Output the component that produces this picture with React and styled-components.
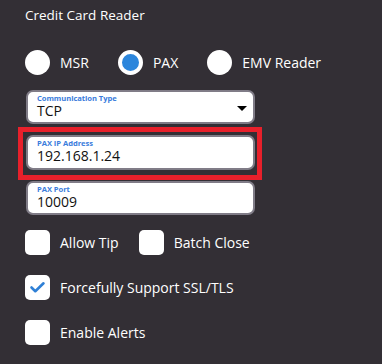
import React from "react";
import styled, { createGlobalStyle } from "styled-components";

const Global = createGlobalStyle`
  html, body { margin: 0; padding: 0; background: #332f35; }
  body { font-family: "Open Sans", "Noto Sans", sans-serif; }
`;

const Page = styled.div`
  width: 382px;
  height: 364px;
  box-sizing: border-box;
  padding: 5px 0 0 25px;
  background: #332f35;
  color: #ffffff;
  overflow: hidden;
`;

const Title = styled.div`
  font-size: 13.5px;
  line-height: 20px;
  color: #ffffff;
`;

const RadioRow = styled.div`
  display: flex;
  align-items: center;
  gap: 29px;
  margin-top: 25px;
`;

const Option = styled.label`
  display: flex;
  align-items: center;
  gap: 10px;
  font-size: 14px;
  line-height: 25px;
  color: #ffffff;
`;

const RadioDot = styled.span`
  width: 25px;
  height: 25px;
  border-radius: 50%;
  background: ${(p) => (p.$checked ? "#2c86dc" : "#ffffff")};
  box-sizing: border-box;
  border: ${(p) => (p.$checked ? "4px solid #ffffff" : "none")};
  flex: none;
`;

const Fields = styled.div`
  display: flex;
  flex-direction: column;
  margin-top: 15px;
  margin-left: 1px;
  width: 229px;
`;

const Field = styled.div`
  height: ${(p) => p.$h || 34}px;
  box-sizing: border-box;
  background: #ffffff;
  border: 2px solid #807c87;
  border-radius: 7px;
  padding: 1px 6px 0 9px;
  display: flex;
  align-items: center;
  justify-content: space-between;
`;

const FieldText = styled.div`
  display: flex;
  flex-direction: column;
  align-self: flex-start;
`;

const FieldLabel = styled.div`
  font-size: 7.6px;
  font-weight: 700;
  line-height: 10px;
  color: #3a7cdc;
  letter-spacing: -0.05px;
`;

const FieldValue = styled.div`
  font-size: 14px;
  line-height: 16px;
  color: #111111;
`;

const Caret = styled.span`
  width: 0;
  height: 0;
  border-left: 5px solid transparent;
  border-right: 5px solid transparent;
  border-top: 5px solid #000000;
  margin-top: 1px;
`;

const Highlight = styled.div`
  margin: 3px -7px 1px -8px;
  border: 5px solid #e8202b;
  padding: 3px 2px 5px 3px;
`;

const CheckRow = styled.div`
  display: flex;
  align-items: center;
  gap: 20px;
  margin-top: ${(p) => p.$mt}px;
`;

const Box = styled.span`
  width: 25px;
  height: 25px;
  border-radius: 5px;
  background: #ffffff;
  flex: none;
  display: flex;
`;

function Radio({ checked, children }) {
  return (
    <Option>
      <RadioDot $checked={checked} />
      {children}
    </Option>
  );
}

function Check({ checked, children }) {
  return (
    <Option>
      <Box>
        {checked && (
          <svg width="25" height="25" viewBox="0 0 25 25">
            <polyline
              points="6.5,12.5 10.3,16.2 18.5,8.3"
              fill="none"
              stroke="#2f80d6"
              strokeWidth="2.6"
              strokeLinecap="round"
              strokeLinejoin="round"
            />
          </svg>
        )}
      </Box>
      {children}
    </Option>
  );
}

export default function App() {
  return (
    <>
      <Global />
      <Page>
        <Title>Credit Card Reader</Title>
        <RadioRow>
          <Radio>MSR</Radio>
          <Radio checked>PAX</Radio>
          <Radio>EMV Reader</Radio>
        </RadioRow>
        <Fields>
          <Field>
            <FieldText>
              <FieldLabel>Communication Type</FieldLabel>
              <FieldValue>TCP</FieldValue>
            </FieldText>
            <Caret />
          </Field>
          <Highlight>
            <Field $h={35}>
              <FieldText>
                <FieldLabel>PAX IP Address</FieldLabel>
                <FieldValue>192.168.1.24</FieldValue>
              </FieldText>
            </Field>
          </Highlight>
          <Field>
            <FieldText>
              <FieldLabel>PAX Port</FieldLabel>
              <FieldValue>10009</FieldValue>
            </FieldText>
          </Field>
        </Fields>
        <CheckRow $mt={15}>
          <Check>Allow Tip</Check>
          <Check>Batch Close</Check>
        </CheckRow>
        <CheckRow $mt={20}>
          <Check checked>Forcefully Support SSL/TLS</Check>
        </CheckRow>
        <CheckRow $mt={20}>
          <Check>Enable Alerts</Check>
        </CheckRow>
      </Page>
    </>
  );
}
